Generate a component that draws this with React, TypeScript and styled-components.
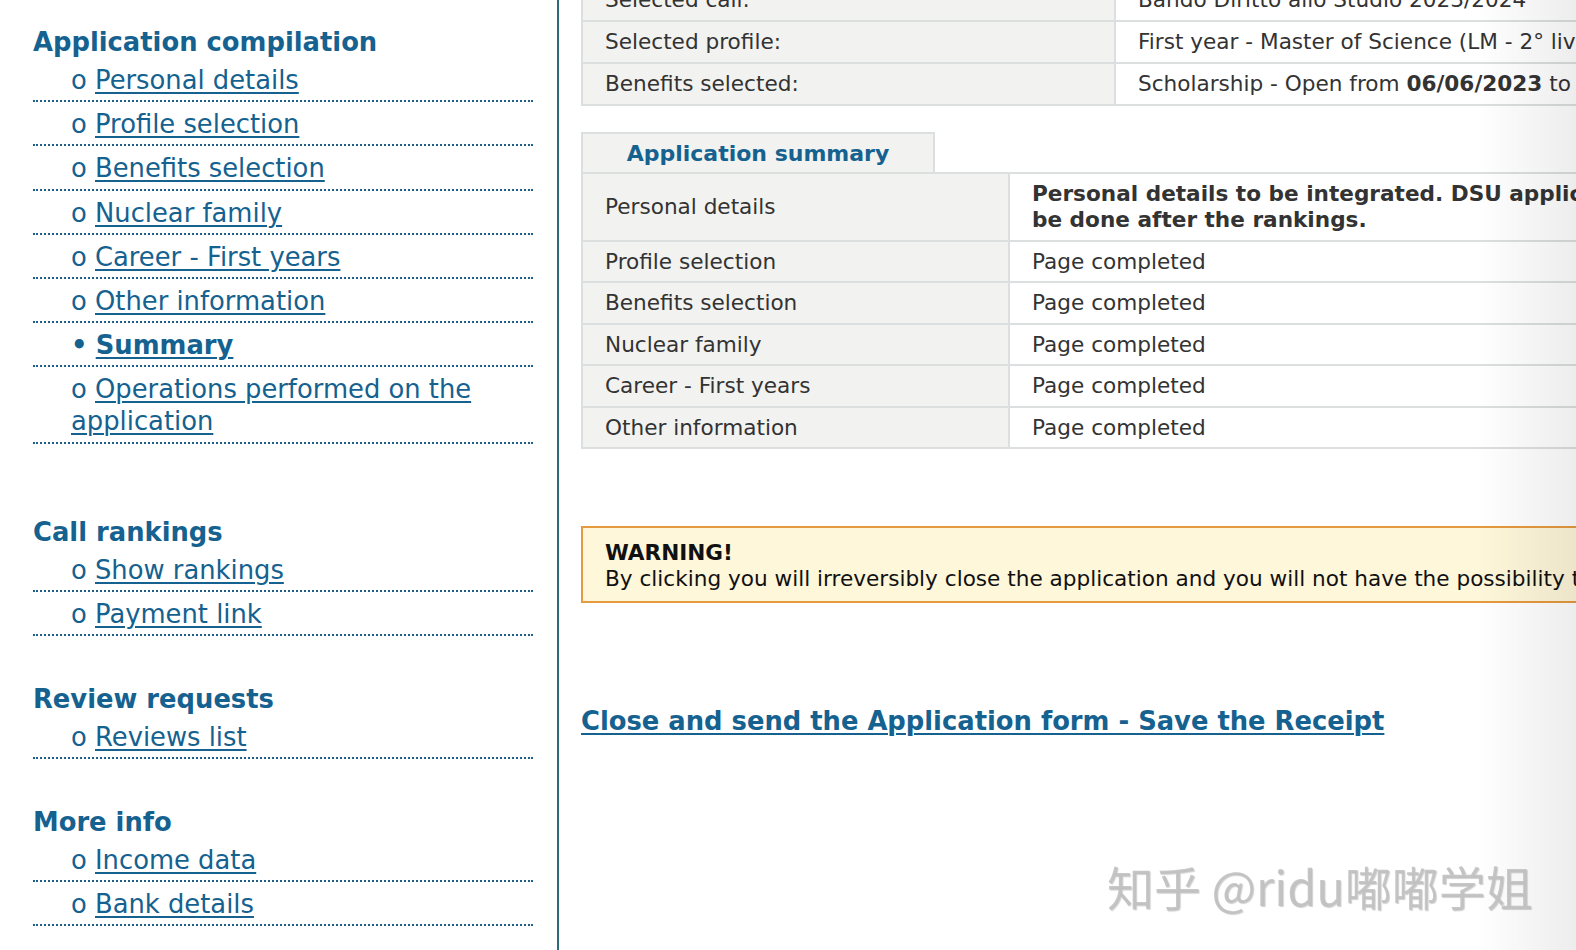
import React from 'react';
import styled, { createGlobalStyle } from 'styled-components';

const BLUE = '#15618f';

const GlobalStyle = createGlobalStyle`
  html, body {
    margin: 0;
    padding: 0;
    background: #fff;
    overflow: hidden;
  }
  body {
    font-family: "DejaVu Sans", Verdana, sans-serif;
  }
`;

type NavEntry = { label: string; active?: boolean };
type NavSection = { title: string; items: NavEntry[]; extra?: number };

const sections: NavSection[] = [
  {
    title: 'Application compilation',
    extra: 25,
    items: [
      { label: 'Personal details' },
      { label: 'Profile selection' },
      { label: 'Benefits selection' },
      { label: 'Nuclear family' },
      { label: 'Career - First years' },
      { label: 'Other information' },
      { label: 'Summary', active: true },
      { label: 'Operations performed on the application' },
    ],
  },
  {
    title: 'Call rankings',
    items: [{ label: 'Show rankings' }, { label: 'Payment link' }],
  },
  {
    title: 'Review requests',
    items: [{ label: 'Reviews list' }],
  },
  {
    title: 'More info',
    items: [{ label: 'Income data' }, { label: 'Bank details' }],
  },
];

const summaryRows = [
  'Profile selection',
  'Benefits selection',
  'Nuclear family',
  'Career - First years',
  'Other information',
];

const App: React.FC = () => {
  return (
    <>
      <GlobalStyle />
      <StyledPage>
        <StyledSidebar>
          {sections.map((section) => (
            <StyledSection key={section.title} $extra={section.extra}>
              <StyledSectionTitle>{section.title}</StyledSectionTitle>
              <StyledNavList>
                {section.items.map((item) => (
                  <StyledNavItem key={item.label}>
                    <StyledBullet $active={item.active}>
                      {item.active ? '•' : 'o'}
                    </StyledBullet>{' '}
                    <StyledNavLink href="#" $active={item.active}>
                      {item.label}
                    </StyledNavLink>
                  </StyledNavItem>
                ))}
              </StyledNavList>
            </StyledSection>
          ))}
        </StyledSidebar>

        <StyledMain>
          <StyledInfoTable>
            <colgroup>
              <col style={{ width: 533 }} />
              <col />
            </colgroup>
            <tbody>
              <tr>
                <StyledLabelCell>Selected call:</StyledLabelCell>
                <StyledValueCell>Bando Diritto allo Studio 2023/2024</StyledValueCell>
              </tr>
              <tr>
                <StyledLabelCell>Selected profile:</StyledLabelCell>
                <StyledValueCell>
                  First year - Master of Science (LM - 2° livello)
                </StyledValueCell>
              </tr>
              <tr>
                <StyledLabelCell>Benefits selected:</StyledLabelCell>
                <StyledValueCell>
                  Scholarship - Open from <b>06/06/2023</b> to <b>01/09/2023</b>
                </StyledValueCell>
              </tr>
            </tbody>
          </StyledInfoTable>

          <StyledTab>Application summary</StyledTab>
          <StyledSummaryTable>
            <colgroup>
              <col style={{ width: 427 }} />
              <col />
            </colgroup>
            <tbody>
              <tr>
                <StyledLabelCell $compact>Personal details</StyledLabelCell>
                <StyledValueCell $compact>
                  <b>
                    Personal details to be integrated. DSU application integration can only
                    <br />
                    be done after the rankings.
                  </b>
                </StyledValueCell>
              </tr>
              {summaryRows.map((row) => (
                <tr key={row}>
                  <StyledLabelCell $compact>{row}</StyledLabelCell>
                  <StyledValueCell $compact>Page completed</StyledValueCell>
                </tr>
              ))}
            </tbody>
          </StyledSummaryTable>

          <StyledWarning>
            <strong>WARNING!</strong>
            <div>
              By clicking you will irreversibly close the application and you will not have the
              possibility to modify it anymore.
            </div>
          </StyledWarning>

          <StyledCloseLink href="#">
            Close and send the Application form - Save the Receipt
          </StyledCloseLink>
        </StyledMain>
      </StyledPage>

      <StyledEdgeShade />
      <StyledWatermark>知乎 @ridu嘟嘟学姐</StyledWatermark>
    </>
  );
};

const StyledPage = styled.div`
  display: flex;
  height: 950px;
  overflow: hidden;
`;

const StyledSidebar = styled.nav`
  width: 559px;
  flex-shrink: 0;
  box-sizing: border-box;
  border-right: 2px solid #2c6a78;
  padding: 27px 24px 0 33px;
  display: flex;
  flex-direction: column;
  gap: 48px;
`;

const StyledSection = styled.section<{ $extra?: number }>`
  padding-bottom: ${(p) => p.$extra ?? 0}px;
`;

const StyledSectionTitle = styled.h2`
  margin: 0;
  font-size: 25.8px;
  line-height: 31px;
  font-weight: bold;
  color: ${BLUE};
`;

const StyledNavList = styled.ul`
  list-style: none;
  margin: 0;
  padding: 0;
`;

const StyledNavItem = styled.li`
  padding: 6px 0 4.2px 38px;
  font-size: 25.8px;
  line-height: 32px;
  color: ${BLUE};
  border-bottom: 2px dotted #1d5f88;
`;

const StyledBullet = styled.span<{ $active?: boolean }>`
  font-weight: ${(p) => (p.$active ? 'bold' : 'normal')};
`;

const StyledNavLink = styled.a<{ $active?: boolean }>`
  color: ${BLUE};
  font-weight: ${(p) => (p.$active ? 'bold' : 'normal')};
  text-decoration: underline;
  text-decoration-thickness: 2px;
  text-underline-offset: 3px;
`;

const StyledMain = styled.main`
  flex: 1;
  min-width: 0;
  padding-left: 22px;
  overflow: hidden;
  color: #333;
  font-size: 21.6px;
  line-height: 26px;
`;

const StyledInfoTable = styled.table`
  border-collapse: collapse;
  table-layout: fixed;
  width: 1500px;
  margin-top: -22px;
`;

const StyledSummaryTable = styled(StyledInfoTable)`
  margin-top: 0;
`;

const StyledLabelCell = styled.td<{ $compact?: boolean }>`
  background: #f2f2f0;
  border: 2px solid #dcdfdf;
  padding: 7px 22px ${(p) => (p.$compact ? '6.5px' : '7px')};
  white-space: nowrap;
  vertical-align: middle;
`;

const StyledValueCell = styled(StyledLabelCell)`
  background: #fff;
`;

const StyledTab = styled.div`
  margin-top: 26px;
  width: 354px;
  height: 40px;
  box-sizing: border-box;
  background: #f2f2f0;
  border: 2px solid #dcdfdf;
  border-bottom: none;
  text-align: center;
  line-height: 40px;
  font-size: 22px;
  font-weight: bold;
  color: ${BLUE};
`;

const StyledWarning = styled.div`
  margin-top: 77px;
  width: 1500px;
  box-sizing: border-box;
  border: 2px solid #e69a3f;
  background: #fef7da;
  padding: 12px 22px 9px;
  color: #111;
  white-space: nowrap;
`;

const StyledCloseLink = styled.a`
  display: inline-block;
  margin-top: 102px;
  font-size: 25.8px;
  line-height: 32px;
  font-weight: bold;
  color: ${BLUE};
  text-decoration: underline;
  text-decoration-thickness: 2px;
  text-underline-offset: 3px;
`;

const StyledEdgeShade = styled.div`
  position: fixed;
  top: 0;
  right: 0;
  width: 100px;
  height: 100%;
  pointer-events: none;
  background: linear-gradient(to right, rgba(0, 0, 0, 0), rgba(0, 0, 0, 0.07));
`;

const StyledWatermark = styled.div`
  position: fixed;
  left: 1107px;
  top: 856px;
  font-family: "Noto Sans CJK SC", "DejaVu Sans", sans-serif;
  font-size: 47px;
  line-height: 60px;
  color: rgba(190, 190, 190, 0.85);
  text-shadow: 1px 1px 1px rgba(0, 0, 0, 0.18);
  white-space: nowrap;
  pointer-events: none;
`;

export default App;
